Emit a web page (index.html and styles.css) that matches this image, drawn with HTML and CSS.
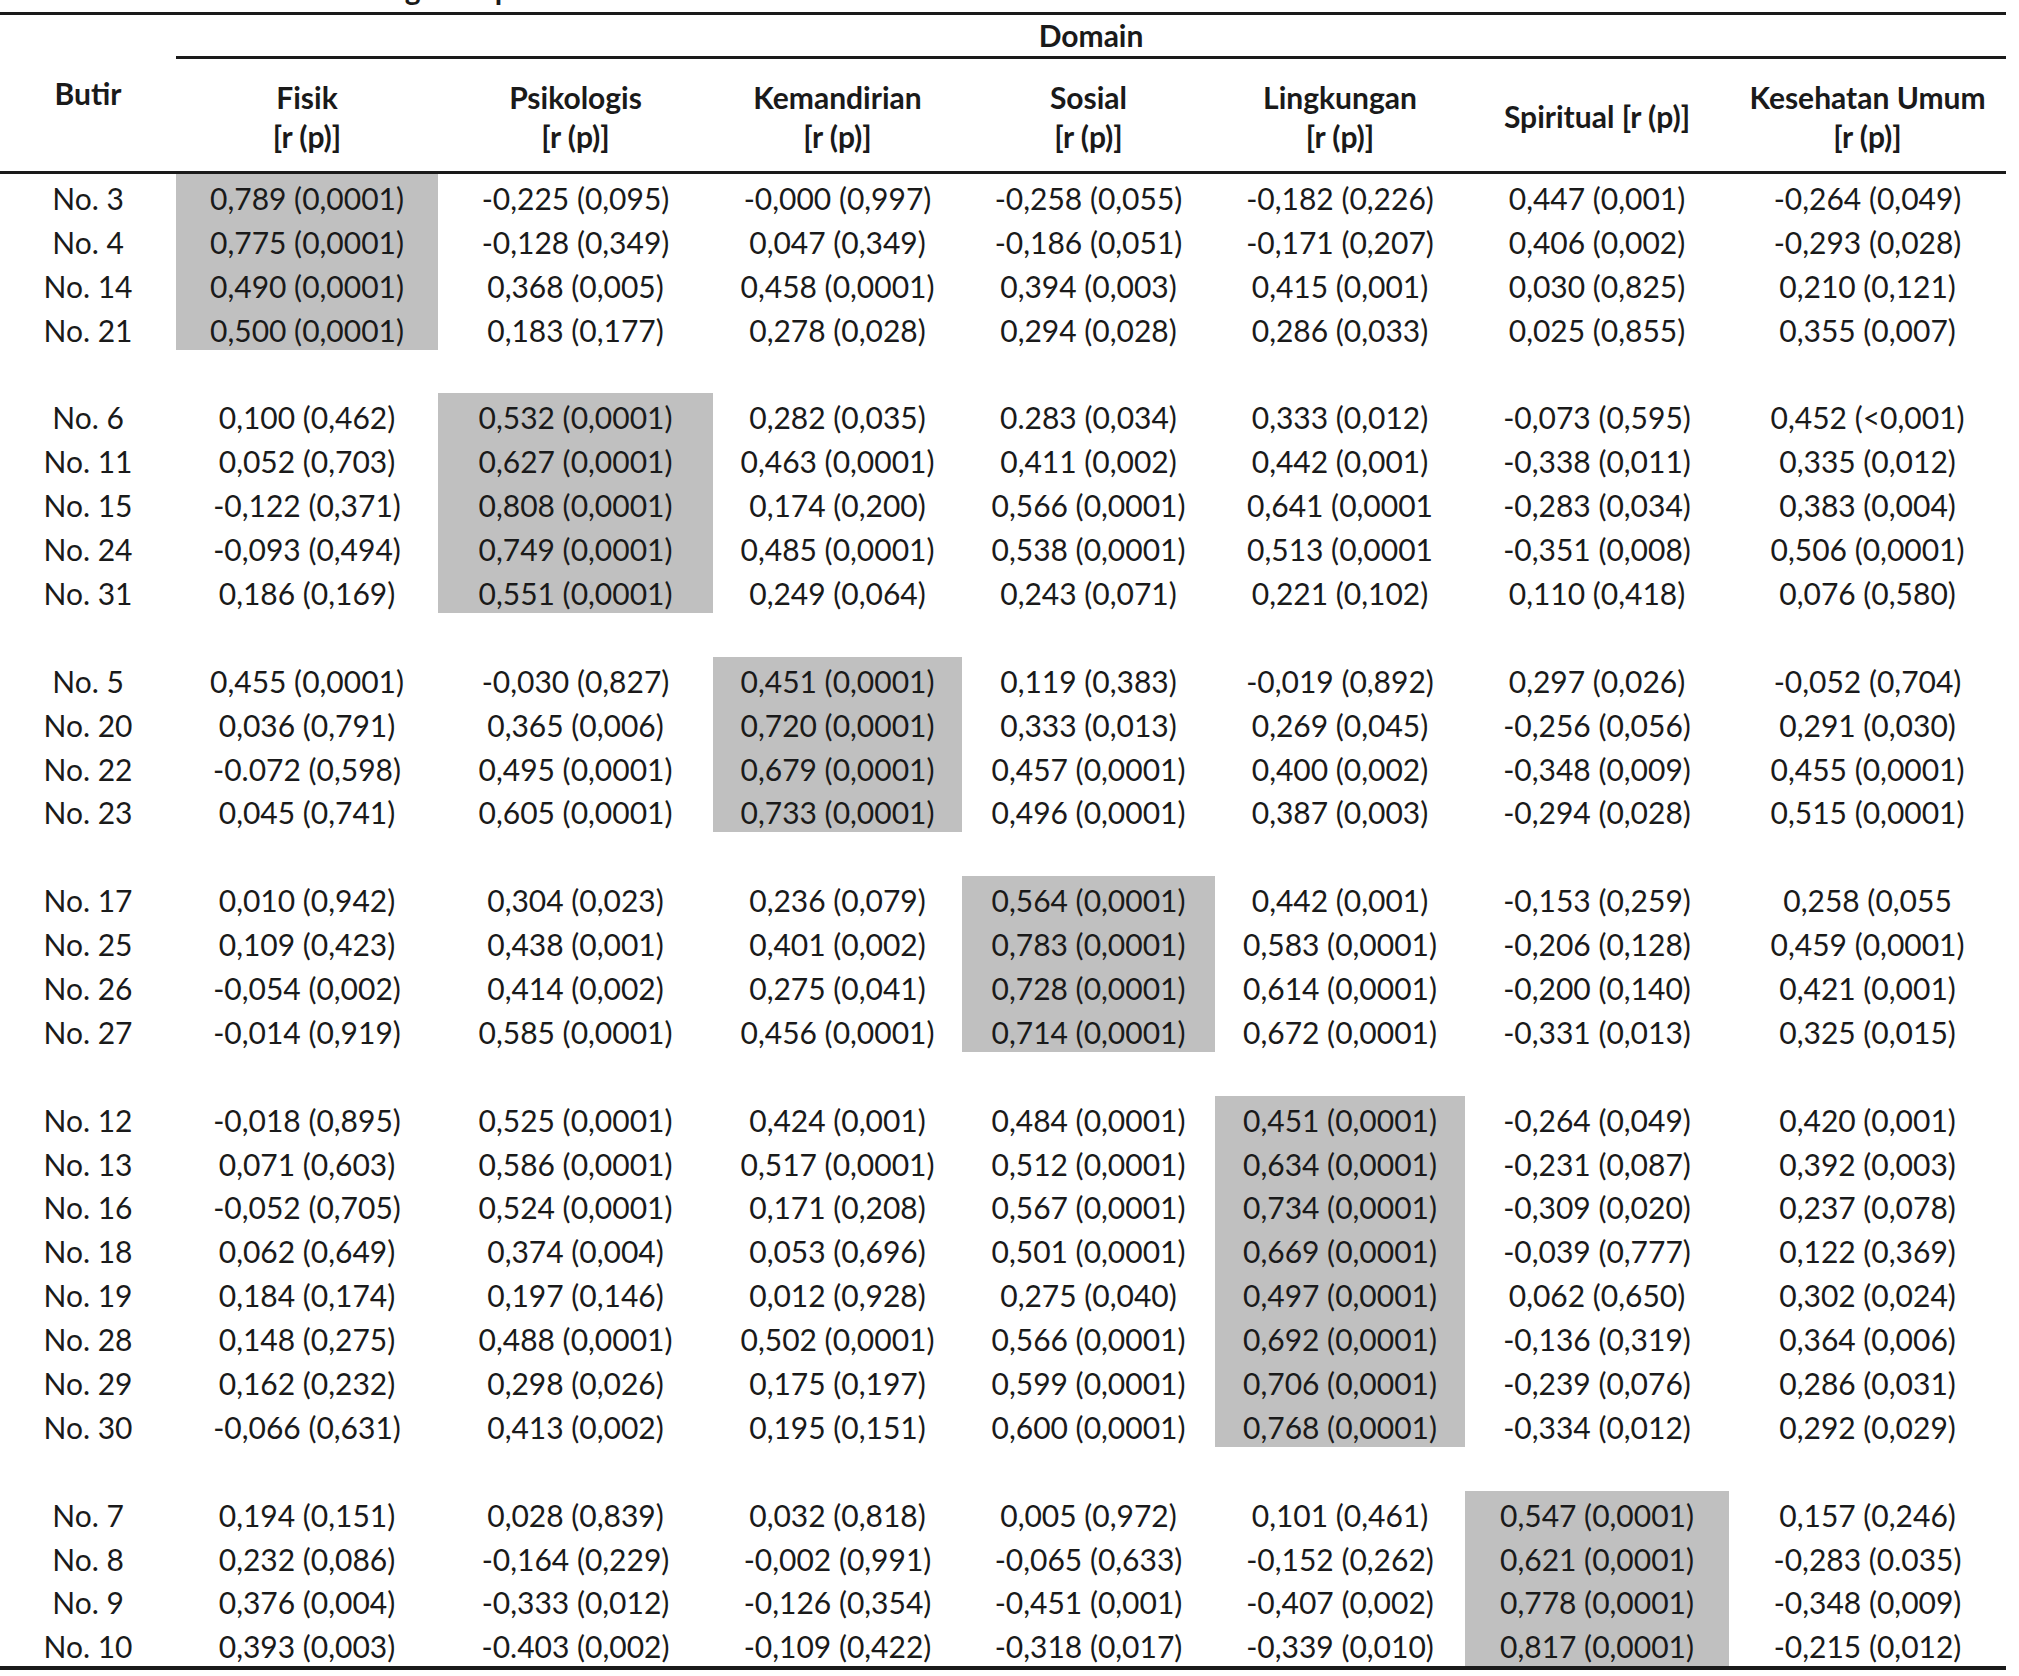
FILE: index.html
```html
<!DOCTYPE html>
<html lang="id">
<head>
    <meta charset="UTF-8">
    <meta name="viewport" content="width=device-width, initial-scale=1.0">
    <title>Korelasi Butir dengan Domain</title>
    <link rel="stylesheet" href="styles.css">
</head>
<body>
    <div class="caption"><div class="caption-text">Tabel 3. Korelasi butir dengan tiap domain</div></div>
    <table class="corr">
        <colgroup>
            <col class="c-butir">
            <col class="c-fisik">
            <col class="c-psi">
            <col class="c-kem">
            <col class="c-sos">
            <col class="c-ling">
            <col class="c-spi">
            <col class="c-kes">
        </colgroup>
        <thead>
            <tr class="head-1">
                <th rowspan="2" class="butir">Butir</th>
                <th colspan="7" class="domain">Domain</th>
            </tr>
            <tr class="head-2">
                <th>Fisik<br>[r (p)]</th>
                <th>Psikologis<br>[r (p)]</th>
                <th>Kemandirian<br>[r (p)]</th>
                <th>Sosial<br>[r (p)]</th>
                <th>Lingkungan<br>[r (p)]</th>
                <th>Spiritual [r (p)]</th>
                <th>Kesehatan Umum<br>[r (p)]</th>
            </tr>
        </thead>
        <tbody>
            <tr><td>No. 3</td><td class="hl">0,789 (0,0001)</td><td>-0,225 (0,095)</td><td>-0,000 (0,997)</td><td>-0,258 (0,055)</td><td>-0,182 (0,226)</td><td>0,447 (0,001)</td><td>-0,264 (0,049)</td></tr>
            <tr><td>No. 4</td><td class="hl">0,775 (0,0001)</td><td>-0,128 (0,349)</td><td>0,047 (0,349)</td><td>-0,186 (0,051)</td><td>-0,171 (0,207)</td><td>0,406 (0,002)</td><td>-0,293 (0,028)</td></tr>
            <tr><td>No. 14</td><td class="hl">0,490 (0,0001)</td><td>0,368 (0,005)</td><td>0,458 (0,0001)</td><td>0,394 (0,003)</td><td>0,415 (0,001)</td><td>0,030 (0,825)</td><td>0,210 (0,121)</td></tr>
            <tr><td>No. 21</td><td class="hl">0,500 (0,0001)</td><td>0,183 (0,177)</td><td>0,278 (0,028)</td><td>0,294 (0,028)</td><td>0,286 (0,033)</td><td>0,025 (0,855)</td><td>0,355 (0,007)</td></tr>
            <tr class="gap"><td colspan="8"></td></tr>

            <tr><td>No. 6</td><td>0,100 (0,462)</td><td class="hl">0,532 (0,0001)</td><td>0,282 (0,035)</td><td>0.283 (0,034)</td><td>0,333 (0,012)</td><td>-0,073 (0,595)</td><td>0,452 (&lt;0,001)</td></tr>
            <tr><td>No. 11</td><td>0,052 (0,703)</td><td class="hl">0,627 (0,0001)</td><td>0,463 (0,0001)</td><td>0,411 (0,002)</td><td>0,442 (0,001)</td><td>-0,338 (0,011)</td><td>0,335 (0,012)</td></tr>
            <tr><td>No. 15</td><td>-0,122 (0,371)</td><td class="hl">0,808 (0,0001)</td><td>0,174 (0,200)</td><td>0,566 (0,0001)</td><td>0,641 (0,0001</td><td>-0,283 (0,034)</td><td>0,383 (0,004)</td></tr>
            <tr><td>No. 24</td><td>-0,093 (0,494)</td><td class="hl">0,749 (0,0001)</td><td>0,485 (0,0001)</td><td>0,538 (0,0001)</td><td>0,513 (0,0001</td><td>-0,351 (0,008)</td><td>0,506 (0,0001)</td></tr>
            <tr><td>No. 31</td><td>0,186 (0,169)</td><td class="hl">0,551 (0,0001)</td><td>0,249 (0,064)</td><td>0,243 (0,071)</td><td>0,221 (0,102)</td><td>0,110 (0,418)</td><td>0,076 (0,580)</td></tr>
            <tr class="gap"><td colspan="8"></td></tr>

            <tr><td>No. 5</td><td>0,455 (0,0001)</td><td>-0,030 (0,827)</td><td class="hl">0,451 (0,0001)</td><td>0,119 (0,383)</td><td>-0,019 (0,892)</td><td>0,297 (0,026)</td><td>-0,052 (0,704)</td></tr>
            <tr><td>No. 20</td><td>0,036 (0,791)</td><td>0,365 (0,006)</td><td class="hl">0,720 (0,0001)</td><td>0,333 (0,013)</td><td>0,269 (0,045)</td><td>-0,256 (0,056)</td><td>0,291 (0,030)</td></tr>
            <tr><td>No. 22</td><td>-0.072 (0,598)</td><td>0,495 (0,0001)</td><td class="hl">0,679 (0,0001)</td><td>0,457 (0,0001)</td><td>0,400 (0,002)</td><td>-0,348 (0,009)</td><td>0,455 (0,0001)</td></tr>
            <tr><td>No. 23</td><td>0,045 (0,741)</td><td>0,605 (0,0001)</td><td class="hl">0,733 (0,0001)</td><td>0,496 (0,0001)</td><td>0,387 (0,003)</td><td>-0,294 (0,028)</td><td>0,515 (0,0001)</td></tr>
            <tr class="gap"><td colspan="8"></td></tr>

            <tr><td>No. 17</td><td>0,010 (0,942)</td><td>0,304 (0,023)</td><td>0,236 (0,079)</td><td class="hl">0,564 (0,0001)</td><td>0,442 (0,001)</td><td>-0,153 (0,259)</td><td>0,258 (0,055</td></tr>
            <tr><td>No. 25</td><td>0,109 (0,423)</td><td>0,438 (0,001)</td><td>0,401 (0,002)</td><td class="hl">0,783 (0,0001)</td><td>0,583 (0,0001)</td><td>-0,206 (0,128)</td><td>0,459 (0,0001)</td></tr>
            <tr><td>No. 26</td><td>-0,054 (0,002)</td><td>0,414 (0,002)</td><td>0,275 (0,041)</td><td class="hl">0,728 (0,0001)</td><td>0,614 (0,0001)</td><td>-0,200 (0,140)</td><td>0,421 (0,001)</td></tr>
            <tr><td>No. 27</td><td>-0,014 (0,919)</td><td>0,585 (0,0001)</td><td>0,456 (0,0001)</td><td class="hl">0,714 (0,0001)</td><td>0,672 (0,0001)</td><td>-0,331 (0,013)</td><td>0,325 (0,015)</td></tr>
            <tr class="gap"><td colspan="8"></td></tr>

            <tr><td>No. 12</td><td>-0,018 (0,895)</td><td>0,525 (0,0001)</td><td>0,424 (0,001)</td><td>0,484 (0,0001)</td><td class="hl">0,451 (0,0001)</td><td>-0,264 (0,049)</td><td>0,420 (0,001)</td></tr>
            <tr><td>No. 13</td><td>0,071 (0,603)</td><td>0,586 (0,0001)</td><td>0,517 (0,0001)</td><td>0,512 (0,0001)</td><td class="hl">0,634 (0,0001)</td><td>-0,231 (0,087)</td><td>0,392 (0,003)</td></tr>
            <tr><td>No. 16</td><td>-0,052 (0,705)</td><td>0,524 (0,0001)</td><td>0,171 (0,208)</td><td>0,567 (0,0001)</td><td class="hl">0,734 (0,0001)</td><td>-0,309 (0,020)</td><td>0,237 (0,078)</td></tr>
            <tr><td>No. 18</td><td>0,062 (0,649)</td><td>0,374 (0,004)</td><td>0,053 (0,696)</td><td>0,501 (0,0001)</td><td class="hl">0,669 (0,0001)</td><td>-0,039 (0,777)</td><td>0,122 (0,369)</td></tr>
            <tr><td>No. 19</td><td>0,184 (0,174)</td><td>0,197 (0,146)</td><td>0,012 (0,928)</td><td>0,275 (0,040)</td><td class="hl">0,497 (0,0001)</td><td>0,062 (0,650)</td><td>0,302 (0,024)</td></tr>
            <tr><td>No. 28</td><td>0,148 (0,275)</td><td>0,488 (0,0001)</td><td>0,502 (0,0001)</td><td>0,566 (0,0001)</td><td class="hl">0,692 (0,0001)</td><td>-0,136 (0,319)</td><td>0,364 (0,006)</td></tr>
            <tr><td>No. 29</td><td>0,162 (0,232)</td><td>0,298 (0,026)</td><td>0,175 (0,197)</td><td>0,599 (0,0001)</td><td class="hl">0,706 (0,0001)</td><td>-0,239 (0,076)</td><td>0,286 (0,031)</td></tr>
            <tr><td>No. 30</td><td>-0,066 (0,631)</td><td>0,413 (0,002)</td><td>0,195 (0,151)</td><td>0,600 (0,0001)</td><td class="hl">0,768 (0,0001)</td><td>-0,334 (0,012)</td><td>0,292 (0,029)</td></tr>
            <tr class="gap"><td colspan="8"></td></tr>

            <tr><td>No. 7</td><td>0,194 (0,151)</td><td>0,028 (0,839)</td><td>0,032 (0,818)</td><td>0,005 (0,972)</td><td>0,101 (0,461)</td><td class="hl">0,547 (0,0001)</td><td>0,157 (0,246)</td></tr>
            <tr><td>No. 8</td><td>0,232 (0,086)</td><td>-0,164 (0,229)</td><td>-0,002 (0,991)</td><td>-0,065 (0,633)</td><td>-0,152 (0,262)</td><td class="hl">0,621 (0,0001)</td><td>-0,283 (0.035)</td></tr>
            <tr><td>No. 9</td><td>0,376 (0,004)</td><td>-0,333 (0,012)</td><td>-0,126 (0,354)</td><td>-0,451 (0,001)</td><td>-0,407 (0,002)</td><td class="hl">0,778 (0,0001)</td><td>-0,348 (0,009)</td></tr>
            <tr><td>No. 10</td><td>0,393 (0,003)</td><td>-0.403 (0,002)</td><td>-0,109 (0,422)</td><td>-0,318 (0,017)</td><td>-0,339 (0,010)</td><td class="hl">0,817 (0,0001)</td><td>-0,215 (0,012)</td></tr>
        </tbody>
    </table>
</body>
</html>
```

FILE: styles.css
```css
body {
    margin: 0;
    font-family: Lato, "Liberation Sans", sans-serif;
    font-size: 30px;
    color: #1a1a1a;
    background: #fff;
}

/* only the tail of the caption line is left in the crop */
.caption {
    height: 12px;
    overflow: hidden;
}
.caption-text {
    margin-top: -30px;
    padding-left: 60px;
    line-height: 36px;
    font-weight: bold;
    white-space: nowrap;
}

.corr {
    width: 2006px;
    table-layout: fixed;
    border-collapse: separate;
    border-spacing: 0;
    border-top: 3px solid #1a1a1a;
    border-bottom: 4px solid #1a1a1a;
}
.c-butir { width: 176px; }
.c-fisik { width: 262px; }
.c-psi   { width: 275px; }
.c-kem   { width: 249px; }
.c-sos   { width: 253px; }
.c-ling  { width: 250px; }
.c-spi   { width: 264px; }
.c-kes   { width: 277px; }

th, td {
    box-sizing: border-box;
    padding: 0;
    text-align: center;
    white-space: nowrap;
}

th {
    font-weight: bold;
    line-height: 39px;
    vertical-align: middle;
}
th.butir {
    border-bottom: 3px solid #1a1a1a;
}
th.domain {
    height: 44px;
    border-bottom: 3px solid #1a1a1a;
}
.head-2 th {
    height: 115px;
    padding-top: 3px;
    border-bottom: 3px solid #1a1a1a;
}

td {
    height: 43.9px;
    padding-top: 4px;
    line-height: 36px;
    vertical-align: middle;
}
td.hl {
    background-color: #c0c0c0;
}
.gap td {
    height: 43.9px;
}
```
